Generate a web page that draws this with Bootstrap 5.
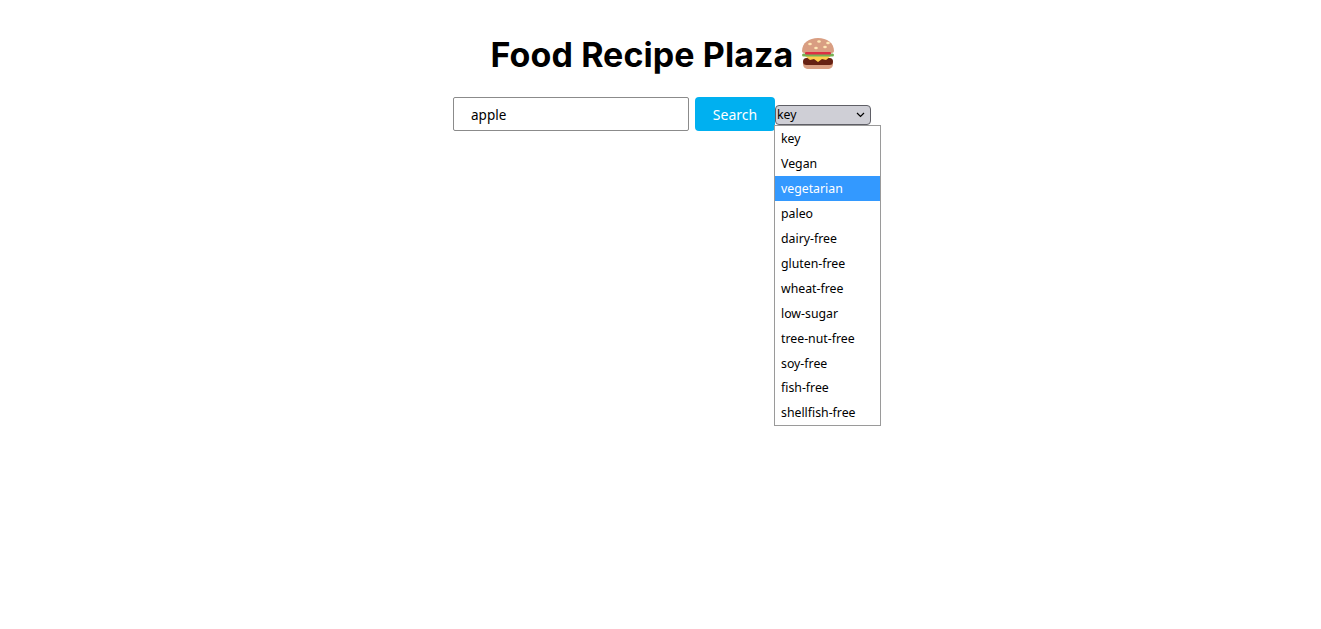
<!DOCTYPE html>
<html lang="en">
<head>
<meta charset="utf-8">
<title>Food Recipe Plaza</title>
<link href="https://cdn.jsdelivr.net/npm/bootstrap@5.3.0/dist/css/bootstrap.min.css" rel="stylesheet">
<style>
html,body{background:#fff;height:100%;overflow:hidden}
body{font-family:"Noto Sans","Open Sans",sans-serif;color:#000}
.page-title{font-family:Inter,"Liberation Sans",sans-serif;font-weight:700;font-size:34px;line-height:40px;margin:0;padding:12px 0 0 4px;letter-spacing:.08px;color:#000;height:97px}
.title-wrap{gap:9px}
.burger{width:32px;height:31px;margin-top:-2px}
.search-row{width:424px;margin-left:453px}
.q-input{width:236px;height:34px;border:1px solid #8b8b8b;border-radius:2px;padding:2px 17px 0;font-size:13.5px;color:#000;outline:0;background:#fff}
.q-btn{width:80px;height:34px;margin-left:6px;border:0;border-radius:4px;background:#00b0f0;color:#fff;font-size:14px;padding:0}
.select-box{width:96px;margin-bottom:6px;margin-top:8px}
.key-select{display:block;appearance:none;-webkit-appearance:none;width:96px;height:20px;font-family:inherit;font-size:12.3px;line-height:16px;padding:0 0 0 1px;color:#000;background-color:#cfcfd6;border:1px solid #5f5f66;border-radius:4px}
.chev{position:absolute;right:6px;top:7px;width:9px;height:6px;pointer-events:none}
.opt-menu{position:absolute;left:-1px;top:20px;width:107px;height:301px;margin:0;padding:0;list-style:none;background:#fff;border:1px solid #9a9a9a;display:flex;flex-direction:column;z-index:5}
.opt-menu li{flex:1 1 0;display:flex;align-items:center;padding:2px 0 0 6px;font-size:12.3px;color:#000}
.opt-menu li.picked{background:#3399ff;color:#fff}
</style>
</head>
<body>
<h1 class="page-title d-flex justify-content-center align-items-center title-wrap">
  <span>Food Recipe Plaza</span>
  <svg class="burger" viewBox="0 0 32 31" aria-hidden="true">
    <path d="M1 24h30v2c0 3-2 5-6 5H7c-4 0-6-2-6-5z" fill="#d99e82"/>
    <path d="M0 13C0 5 7 0 16 0s16 5 16 13c0 1-1 2-2 2H2c-1 0-2-1-2-2z" fill="#d99e82"/>
    <rect x="1" y="20" width="30" height="7" rx="3.500" fill="#662113"/>
    <path d="M3 18h26l-5 4-4-1-4 3-4-3-4 1z" fill="#ffcc4d"/>
    <rect x="0" y="15.500" width="32" height="3" rx="1.500" fill="#77b255"/>
    <rect x="3" y="14" width="26" height="2.500" rx="1.250" fill="#dd2e44"/>
    <g fill="#ffe8b6">
      <ellipse cx="8" cy="6" rx="1.800" ry="1.300"/><ellipse cx="14" cy="10" rx="1.800" ry="1.300"/>
      <ellipse cx="17" cy="3.500" rx="1.800" ry="1.300"/><ellipse cx="23" cy="9" rx="1.800" ry="1.300"/>
      <ellipse cx="26" cy="5" rx="1.800" ry="1.300"/>
    </g>
  </svg>
</h1>
<form class="search-row d-flex align-items-start">
  <input class="q-input" type="text" value="apple" aria-label="Search">
  <button class="q-btn" type="button">Search</button>
  <div class="select-box position-relative">
    <select class="key-select" aria-label="Diet">
      <option>key</option>
    </select>
    <svg class="chev" viewBox="0 0 9 6" aria-hidden="true"><path d="M1 1l3.500 3.500L8 1" fill="none" stroke="#000" stroke-width="1.200"/></svg>
    <ul class="opt-menu">
      <li>key</li><li>Vegan</li><li class="picked">vegetarian</li><li>paleo</li>
      <li>dairy-free</li><li>gluten-free</li><li>wheat-free</li><li>low-sugar</li>
      <li>tree-nut-free</li><li>soy-free</li><li>fish-free</li><li>shellfish-free</li>
    </ul>
  </div>
</form>
<script src="https://cdn.jsdelivr.net/npm/bootstrap@5.3.0/dist/js/bootstrap.bundle.min.js"></script>
</body>
</html>
